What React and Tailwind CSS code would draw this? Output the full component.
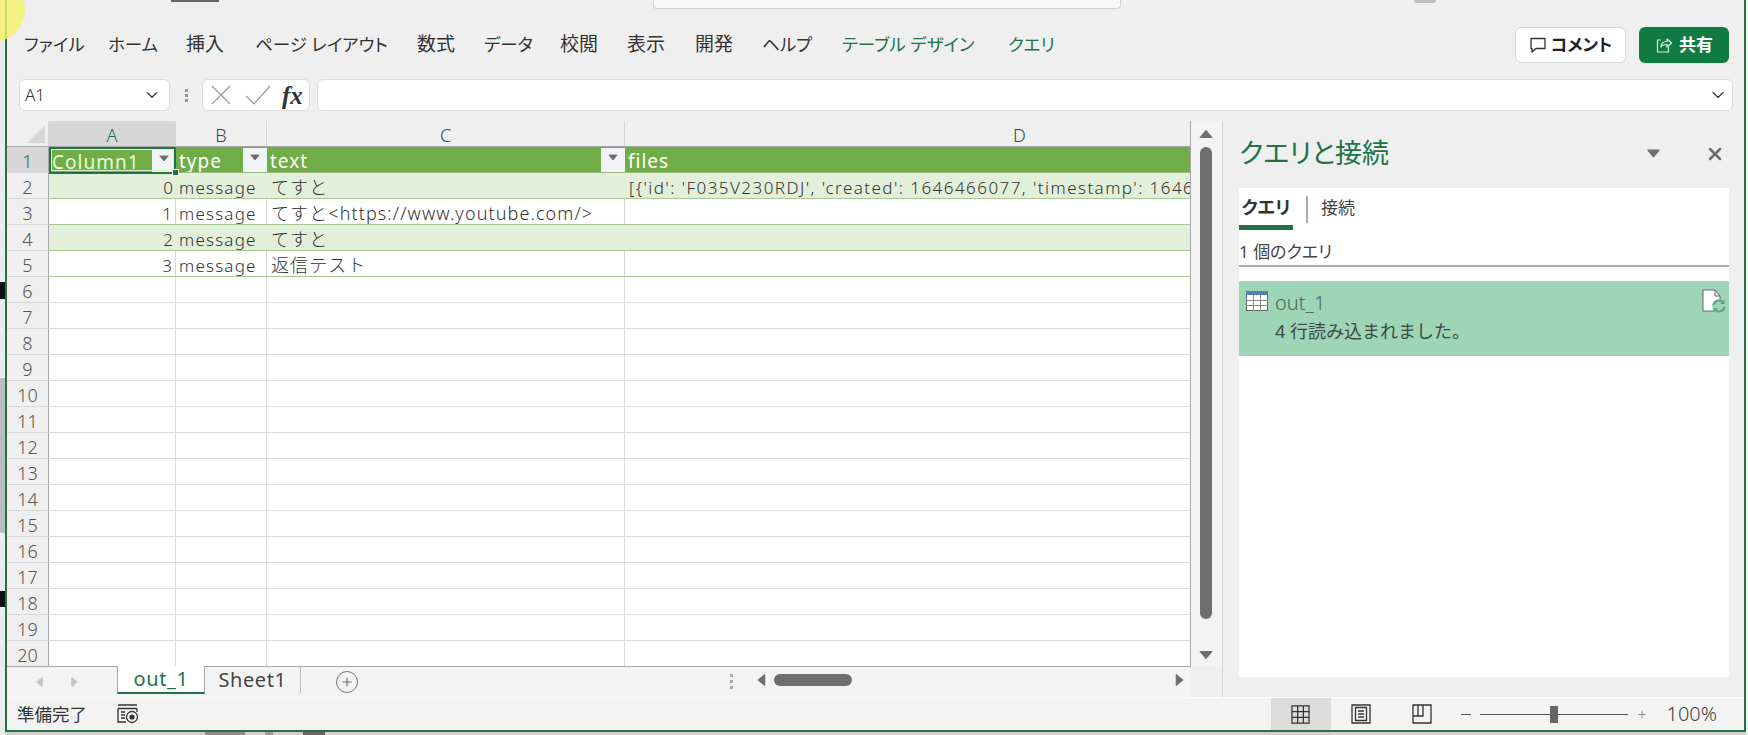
import { ChevronDown, X, Plus } from "lucide-react";

const ribbonTabs = [
  { label: "ファイル", cls: "w-[84px] text-[17.5px] text-[#333]" },
  { label: "ホーム", cls: "w-[78px] text-[17.5px] text-[#333]" },
  { label: "挿入", cls: "w-[69px] text-[19px] text-[#333]" },
  { label: "ページ レイアウト", cls: "w-[162px] text-[17.5px] text-[#333]" },
  { label: "数式", cls: "w-[67px] text-[19px] text-[#333]" },
  { label: "データ", cls: "w-[76px] text-[17.5px] text-[#333]" },
  { label: "校閲", cls: "w-[67px] text-[19px] text-[#333]" },
  { label: "表示", cls: "w-[68px] text-[19px] text-[#333]" },
  { label: "開発", cls: "w-[67px] text-[19px] text-[#333]" },
  { label: "ヘルプ", cls: "w-[80px] text-[17.5px] text-[#333]" },
  { label: "テーブル デザイン", cls: "w-[166px] text-[17.5px] text-[#217346]" },
  { label: "クエリ", cls: "w-[60px] text-[17.5px] text-[#217346]" },
];

const tableRows = [
  { id: "0", band: true, text: "てすと", files: "[{'id': 'F035V230RDJ', 'created': 1646466077, 'timestamp': 1646" },
  { id: "1", band: false, text: "てすと<https://www.youtube.com/>", files: "" },
  { id: "2", band: true, text: "てすと", files: "" },
  { id: "3", band: false, text: "返信テスト", files: "" },
];

const emptyRows = [6, 7, 8, 9, 10, 11, 12, 13, 14, 15, 16, 17, 18, 19, 20];

function Triangle({ className }) {
  return (
    <svg viewBox="0 0 12 8" className={className}>
      <path d="M1 1h10L6 7z" fill="currentColor" stroke="currentColor" strokeLinejoin="round" />
    </svg>
  );
}

function FilterButton() {
  return (
    <span className="flex h-[24px] w-[24px] shrink-0 items-center justify-center bg-[#f2f3f6] text-[#6b6b6b]">
      <Triangle className="mb-1 h-[7px] w-[10px]" />
    </span>
  );
}

function ColumnHeader({ label, active, className = "justify-center" }) {
  return (
    <div className={`flex items-center border-r border-b border-[#a8a8a8] border-r-[#d4d4d4] pt-[4px] text-[18px] font-light ${className} ${active ? "bg-[#d6d6d6] text-[#1f6b45]" : "bg-[#efefef] text-[#444]"}`}>
      {label}
    </div>
  );
}

function RowHeader({ n, active }) {
  return (
    <div className={`flex items-center justify-center border-r border-b border-r-[#a8a8a8] border-b-[#d8d8d8] pt-[4px] text-[18px] font-light ${active ? "bg-[#d6d6d6] text-[#1f6b45]" : "bg-[#efefef] text-[#555]"}`}>
      {n}
    </div>
  );
}

function HeaderCell({ label, filter }) {
  return (
    <div className="flex items-center justify-between overflow-hidden border-b border-[#9dbb82] bg-[#70ad47] pl-[3px] text-[19px] tracking-[1px] text-white">
      <span className="pt-[4px]">{label}</span>
      {filter && <FilterButton />}
    </div>
  );
}

function DataRow({ row, n }) {
  const bg = row.band ? "bg-[#e2efda]" : "bg-white";
  const line = "border-b border-[#a9c795] pt-[4px]";
  const sep = row.band ? "" : "border-r border-r-[#d4d4d4]";
  return (
    <>
      <RowHeader n={n} />
      <div className={`flex items-center justify-end pr-[3px] text-[17px] font-light text-[#333] ${bg} ${line} ${sep}`}>{row.id}</div>
      <div className={`flex items-center pl-[3px] text-[17px] font-light tracking-[1.2px] text-[#333] ${bg} ${line} ${sep}`}>message</div>
      <div className={`flex items-center pl-[4px] text-[18px] font-light tracking-[1.1px] whitespace-pre text-[#333] [font-feature-settings:normal] ${bg} ${line} ${sep}`}>{row.text}</div>
      <div className={`flex items-center overflow-hidden pl-[4px] text-[17px] font-light tracking-[1.45px] whitespace-nowrap text-[#333] ${bg} ${line}`}>{row.files}</div>
    </>
  );
}

function EmptyRow({ n }) {
  const cell = "border-r border-b border-[#dcdcdc] bg-white";
  return (
    <>
      <RowHeader n={n} />
      <div className={cell} />
      <div className={cell} />
      <div className={cell} />
      <div className="border-b border-[#dcdcdc] bg-white" />
    </>
  );
}

function CommentIcon() {
  return (
    <svg viewBox="0 0 18 18" className="h-[18px] w-[18px]" fill="none" stroke="#333" strokeWidth="1.3">
      <path d="M2 2.500h14v10H7l-4 3.500v-3.500H2z" strokeLinejoin="round" />
    </svg>
  );
}

function ShareIcon() {
  return (
    <svg viewBox="0 0 18 18" className="h-[18px] w-[18px]" fill="none" stroke="#dff0e6" strokeWidth="1.2">
      <path d="M6 4H2.500v12h11v-5" />
      <path d="M6 11c0-4 3-5.500 6-5.500V3l4.500 4-4.500 4V8.500c-2.500 0-5 .5-6 2.500z" strokeLinejoin="round" />
    </svg>
  );
}

function TableIcon() {
  return (
    <svg viewBox="0 0 22 20" className="h-[20px] w-[22px]">
      <rect x="0.5" y="0.5" width="21" height="19" fill="#fff" stroke="#666" />
      <rect x="0" y="0" width="22" height="4" fill="#4f7fb5" />
      <path d="M0 9.500h22M0 14.500h22M7.500 4v16M14.500 4v16" stroke="#8a8a8a" fill="none" />
    </svg>
  );
}

function RefreshDocIcon() {
  return (
    <svg viewBox="0 0 24 24" className="h-[24px] w-[24px]">
      <path d="M1 1h12l5 6v15H1z" fill="#fff" stroke="#666" />
      <path d="M13 1v6h5" fill="none" stroke="#666" />
      <circle cx="17" cy="17" r="7" fill="#9fd5b7" />
      <path d="M11.500 16a5.500 5.500 0 0 1 10-2M22.500 18a5.500 5.500 0 0 1-10 2" fill="none" stroke="#5fa585" strokeWidth="2" />
      <path d="M22.500 10.500v4.500h-4.500M11.500 23.500V19h4.500" fill="#5fa585" />
    </svg>
  );
}

function MacroIcon() {
  return (
    <svg viewBox="0 0 22 20" className="h-[20px] w-[22px]" fill="none" stroke="#333" strokeWidth="1.3">
      <path d="M1 1h19M1 4.500h19M1 4.500V18h8M20 4.500V8" />
      <path d="M4 8h4M4 11h4M4 14h4" />
      <circle cx="15" cy="13" r="5.500" fill="#f3f3f3" />
      <circle cx="15" cy="13" r="2.600" fill="#333" stroke="none" />
    </svg>
  );
}

export default function App() {
  return (
    <div className="relative flex h-[735px] w-[1748px] overflow-hidden bg-[#e6e6e6] font-['Noto_Sans','Noto_Sans_CJK_JP',sans-serif] [font-feature-settings:'palt']">
      {/* yellow cursor highlight */}
      <div className="absolute -top-[22px] -left-[39px] z-10 h-[64px] w-[64px] rounded-full bg-[#f5f266]/80" />

      {/* desktop peeking out on the left */}
      <div className="flex w-[5px] shrink-0 flex-col bg-[#ececec]">
        <div className="h-[282px]" />
        <div className="h-[17px] bg-[#111]" />
        <div className="h-[79px]" />
        <div className="h-[155px] bg-[#bdbdbd]" />
        <div className="h-[58px]" />
        <div className="h-[16px] bg-[#111]" />
      </div>

      <div className="flex w-[1741px] shrink-0 flex-col">
        <div className="flex h-[732px] flex-col border-x-2 border-b-2 border-[#217346] bg-[#efefef] text-[#333]">
          {/* leftovers of the title bar */}
          <div className="flex h-[10px] items-start">
            <div className="ml-[164px] h-[2px] w-[48px] bg-[#666]" />
            <div className="ml-[434px] h-[9px] w-[468px] rounded-b-[4px] border-x border-b border-[#d2d2d2] bg-[#f8f8f8]" />
            <div className="ml-[293px] h-[3px] w-[22px] rounded-b-full bg-[#bdbdbd]" />
          </div>

          {/* ribbon tabs */}
          <div className="flex h-[69px] items-center pr-[15px] pl-[17px]">
            <div className="flex items-center">
              {ribbonTabs.map((t) => (
                <span key={t.label} className={t.cls}>{t.label}</span>
              ))}
            </div>
            <div className="ml-auto flex items-center gap-[13px]">
              <button className="flex h-[36px] w-[111px] items-center justify-center gap-[4px] rounded-[6px] border border-[#d8d8d8] bg-white text-[17px] font-bold text-[#222]">
                <CommentIcon />
                コメント
              </button>
              <button className="flex h-[36px] w-[90px] items-center justify-center gap-[6px] rounded-[6px] bg-[#107c41] text-[17px] font-bold text-white">
                <ShareIcon />
                共有
              </button>
            </div>
          </div>

          {/* formula bar */}
          <div className="flex h-[42px] items-start pr-[11px] pl-[12px]">
            <div className="flex h-[32px] w-[151px] items-center justify-between rounded-[6px] border border-[#dcdcdc] bg-white pr-[8px] pl-[5px] text-[17px] font-light text-[#333]">
              A1
              <ChevronDown size={18} strokeWidth={1.6} className="text-[#333]" />
            </div>
            <div className="flex h-[32px] w-[32px] flex-col items-center justify-center gap-[2px]">
              <span className="h-[3px] w-[3px] bg-[#999]" />
              <span className="h-[3px] w-[3px] bg-[#999]" />
              <span className="h-[3px] w-[3px] bg-[#999]" />
            </div>
            <div className="flex h-[32px] w-[108px] items-center rounded-[6px] border border-[#dcdcdc] bg-white pl-[8px]">
              <svg viewBox="0 0 20 20" className="h-[20px] w-[20px]" fill="none" stroke="#9a9a9a" strokeWidth="1.2">
                <path d="M1 1l18 18M19 1L1 19" />
              </svg>
              <svg viewBox="0 0 26 20" className="ml-[14px] h-[20px] w-[26px]" fill="none" stroke="#9a9a9a" strokeWidth="1.2">
                <path d="M1 11l8 8L25 1" />
              </svg>
              <span className="ml-[11px] font-['Liberation_Serif',serif] text-[25px] leading-none font-bold text-[#333] italic">fx</span>
            </div>
            <div className="ml-[7px] flex h-[32px] flex-1 items-center justify-end rounded-[6px] border border-[#dcdcdc] bg-white pr-[4px]">
              <ChevronDown size={20} strokeWidth={1.4} className="text-[#333]" />
            </div>
          </div>

          <div className="flex h-[576px]">
            {/* sheet */}
            <div className="flex w-[1215px] shrink-0 flex-col">
              <div className="flex h-[545px]">
                <div className="grid h-[545px] w-[1184px] shrink-0 grid-cols-[42px_127px_91px_358px_566px] grid-rows-[26px_repeat(20,26px)] overflow-hidden border-r border-[#a8a8a8]">
                  <div className="flex items-end justify-end border-r border-b border-[#a8a8a8] border-r-[#d4d4d4] bg-[#efefef] pr-[3px] pb-[3px]">
                    <svg viewBox="0 0 18 18" className="h-[18px] w-[18px]">
                      <path d="M18 0v18H0z" fill="#d8d8d8" />
                    </svg>
                  </div>
                  <ColumnHeader label="A" active />
                  <ColumnHeader label="B" />
                  <ColumnHeader label="C" />
                  <ColumnHeader label="D" className="justify-start pl-[388px]" />

                  <RowHeader n={1} active />
                  <div className="relative flex items-center justify-between bg-[#70ad47] pl-[3px] text-[19px] tracking-[1px] text-[#eaffd9]">
                    <span className="pt-[4px]">Column1</span>
                    <FilterButton />
                    <span className="absolute inset-[2px] border border-[#dff0d0]" />
                    <span className="absolute inset-0 -bottom-[1px] border-2 border-[#217346]" />
                    <span className="absolute -right-[3px] -bottom-[3px] h-[7px] w-[7px] border border-white bg-[#217346]" />
                  </div>
                  <HeaderCell label="type" filter />
                  <HeaderCell label="text" filter />
                  <HeaderCell label="files" />

                  {tableRows.map((row, i) => (
                    <DataRow key={row.id} row={row} n={i + 2} />
                  ))}
                  {emptyRows.map((n) => (
                    <EmptyRow key={n} n={n} />
                  ))}
                </div>

                {/* vertical scrollbar */}
                <div className="flex w-[31px] flex-col items-center bg-[#f3f3f3] pt-[8px] pr-[2px]">
                  <Triangle className="h-[10px] w-[14px] rotate-180 text-[#6e6e6e]" />
                  <div className="mt-[8px] h-[472px] w-[12px] rounded-full bg-[#6e6e6e]" />
                  <Triangle className="mt-[31px] h-[10px] w-[14px] text-[#6e6e6e]" />
                </div>
              </div>

              {/* sheet tabs and horizontal scrollbar */}
              <div className="flex h-[31px] w-[1184px] items-start border-t border-[#a8a8a8] bg-[#f3f3f3]">
                <div className="flex h-[30px] w-[110px] items-center gap-[24px] pl-[27px] text-[#c4c4c4]">
                  <Triangle className="h-[8px] w-[11px] rotate-90" />
                  <Triangle className="h-[8px] w-[11px] -rotate-90" />
                </div>
                <div className="-mt-px flex h-[28px] w-[88px] items-center justify-center border-x border-[#a8a8a8] border-b-2 border-b-[#217346] bg-white text-[20px] tracking-[0.6px] text-[#217346]">
                  out_1
                </div>
                <div className="flex h-[26px] w-[96px] items-center justify-center border-r border-[#bdbdbd] text-[20px] tracking-[0.6px] text-[#444]">
                  Sheet1
                </div>
                <div className="mt-[4px] ml-[35px] flex h-[22px] w-[22px] items-center justify-center rounded-full border border-[#777] text-[#666]">
                  <Plus size={14} strokeWidth={1.8} />
                </div>
                <div className="mt-[7px] ml-[372px] flex flex-col gap-[3px]">
                  <span className="h-[3px] w-[3px] bg-[#aaa]" />
                  <span className="h-[3px] w-[3px] bg-[#aaa]" />
                  <span className="h-[3px] w-[3px] bg-[#aaa]" />
                </div>
                <div className="mt-[7px] ml-[22px] flex flex-1 items-center pr-[5px]">
                  <Triangle className="h-[10px] w-[13px] rotate-90 text-[#6e6e6e]" />
                  <div className="ml-[6px] h-[12px] w-[78px] rounded-full bg-[#6e6e6e]" />
                  <Triangle className="ml-auto h-[10px] w-[13px] -rotate-90 text-[#6e6e6e]" />
                </div>
              </div>
            </div>

            {/* queries & connections pane */}
            <div className="flex flex-1 flex-col border-l border-[#d6d6d6] pr-[15px] pl-[16px]">
              <div className="flex h-[67px] items-center justify-between pb-[2px]">
                <span className="text-[27px] text-[#217346]">クエリと接続</span>
                <div className="flex items-center gap-[44px] pr-[4px]">
                  <Triangle className="h-[9px] w-[15px] text-[#6e6e6e]" />
                  <X size={20} strokeWidth={3} className="text-[#6e6e6e]" />
                </div>
              </div>
              <div className="flex h-[489px] flex-col bg-white">
                <div className="flex h-[42px] items-start">
                  <div className="flex h-[42px] w-[54px] items-center justify-center border-b-[5px] border-[#217346] pt-[2px] text-[18px] font-bold text-[#333]">
                    クエリ
                  </div>
                  <div className="mt-[8px] ml-[13px] h-[27px] w-[2px] bg-[#aaa]" />
                  <div className="ml-[13px] flex h-[38px] items-center pt-[2px] text-[17px] text-[#444]">接続</div>
                </div>
                <div className="flex h-[37px] items-center border-b-2 border-[#aaa] pt-[8px] text-[17px] text-[#444]">1 個のクエリ</div>
                <div className="mt-[14px] flex h-[75px] items-start justify-between border-t border-[#b5d6c3] bg-[#9fd5b7] pt-[7px] pr-[3px] pl-[7px]">
                  <div className="flex items-start gap-[7px]">
                    <div className="pt-[2px]">
                      <TableIcon />
                    </div>
                    <div className="flex flex-col">
                      <span className="text-[20px] leading-[28px] font-light text-[#4d6b5c]">out_1</span>
                      <span className="mt-[2px] text-[18px] leading-[24px] text-[#3d4a44] [font-feature-settings:normal]">4 行読み込まれました。</span>
                    </div>
                  </div>
                  <RefreshDocIcon />
                </div>
              </div>
            </div>
          </div>

          {/* status bar */}
          <div className="flex h-[33px] items-center border-t border-[#fafafa] bg-[#f3f3f3]">
            <span className="ml-[10px] text-[17.5px] text-[#333] [font-feature-settings:normal]">準備完了</span>
            <div className="ml-[30px]">
              <MacroIcon />
            </div>
            <div className="ml-auto flex h-[32px] items-center pr-[27px]">
              <div className="flex h-[32px] w-[60px] items-center justify-center bg-[#dcdcdc]">
                <svg viewBox="0 0 20 20" className="h-[19px] w-[19px]" fill="none" stroke="#333" strokeWidth="1.3">
                  <path d="M1 1h18v18H1zM1 7h18M1 13h18M7 1v18M13 1v18" />
                </svg>
              </div>
              <div className="flex h-[32px] w-[61px] items-center justify-center">
                <svg viewBox="0 0 20 20" className="h-[20px] w-[20px]" fill="none" stroke="#333" strokeWidth="1.3">
                  <path d="M1 1h18v18H1zM4.500 3.500h11v13h-11zM7 7h6M7 10h6M7 13h6" />
                </svg>
              </div>
              <div className="flex h-[32px] w-[60px] items-center justify-center">
                <svg viewBox="0 0 20 20" className="h-[20px] w-[20px]" fill="none" stroke="#333" strokeWidth="1.3">
                  <path d="M1 1h18v18H1zM1 12h10V1M6 1v11" />
                </svg>
              </div>
              <span className="ml-[9px] h-px w-[10px] bg-[#555]" />
              <div className="relative ml-[9px] h-px w-[148px] bg-[#555]">
                <span className="absolute -top-[8px] left-[70px] h-[17px] w-[8px] bg-[#666]" />
              </div>
              <span className="ml-[8px] flex w-[12px] items-center justify-center text-[#555]">
                <Plus size={13} strokeWidth={1.2} />
              </span>
              <span className="ml-[19px] text-[20px] font-light text-[#444]">100%</span>
            </div>
          </div>
        </div>
        {/* desktop peeking out below */}
        <div className="flex h-[3px] bg-[#cfcfcf]">
          <div className="ml-[200px] h-[3px] w-[40px] bg-[#8c8c8c]" />
          <div className="ml-[20px] h-[3px] w-[8px] bg-[#9a9a9a]" />
          <div className="ml-[30px] h-[3px] w-[22px] bg-[#666]" />
        </div>
      </div>
      <div className="flex-1 bg-[#f2f2f2]" />
    </div>
  );
}
